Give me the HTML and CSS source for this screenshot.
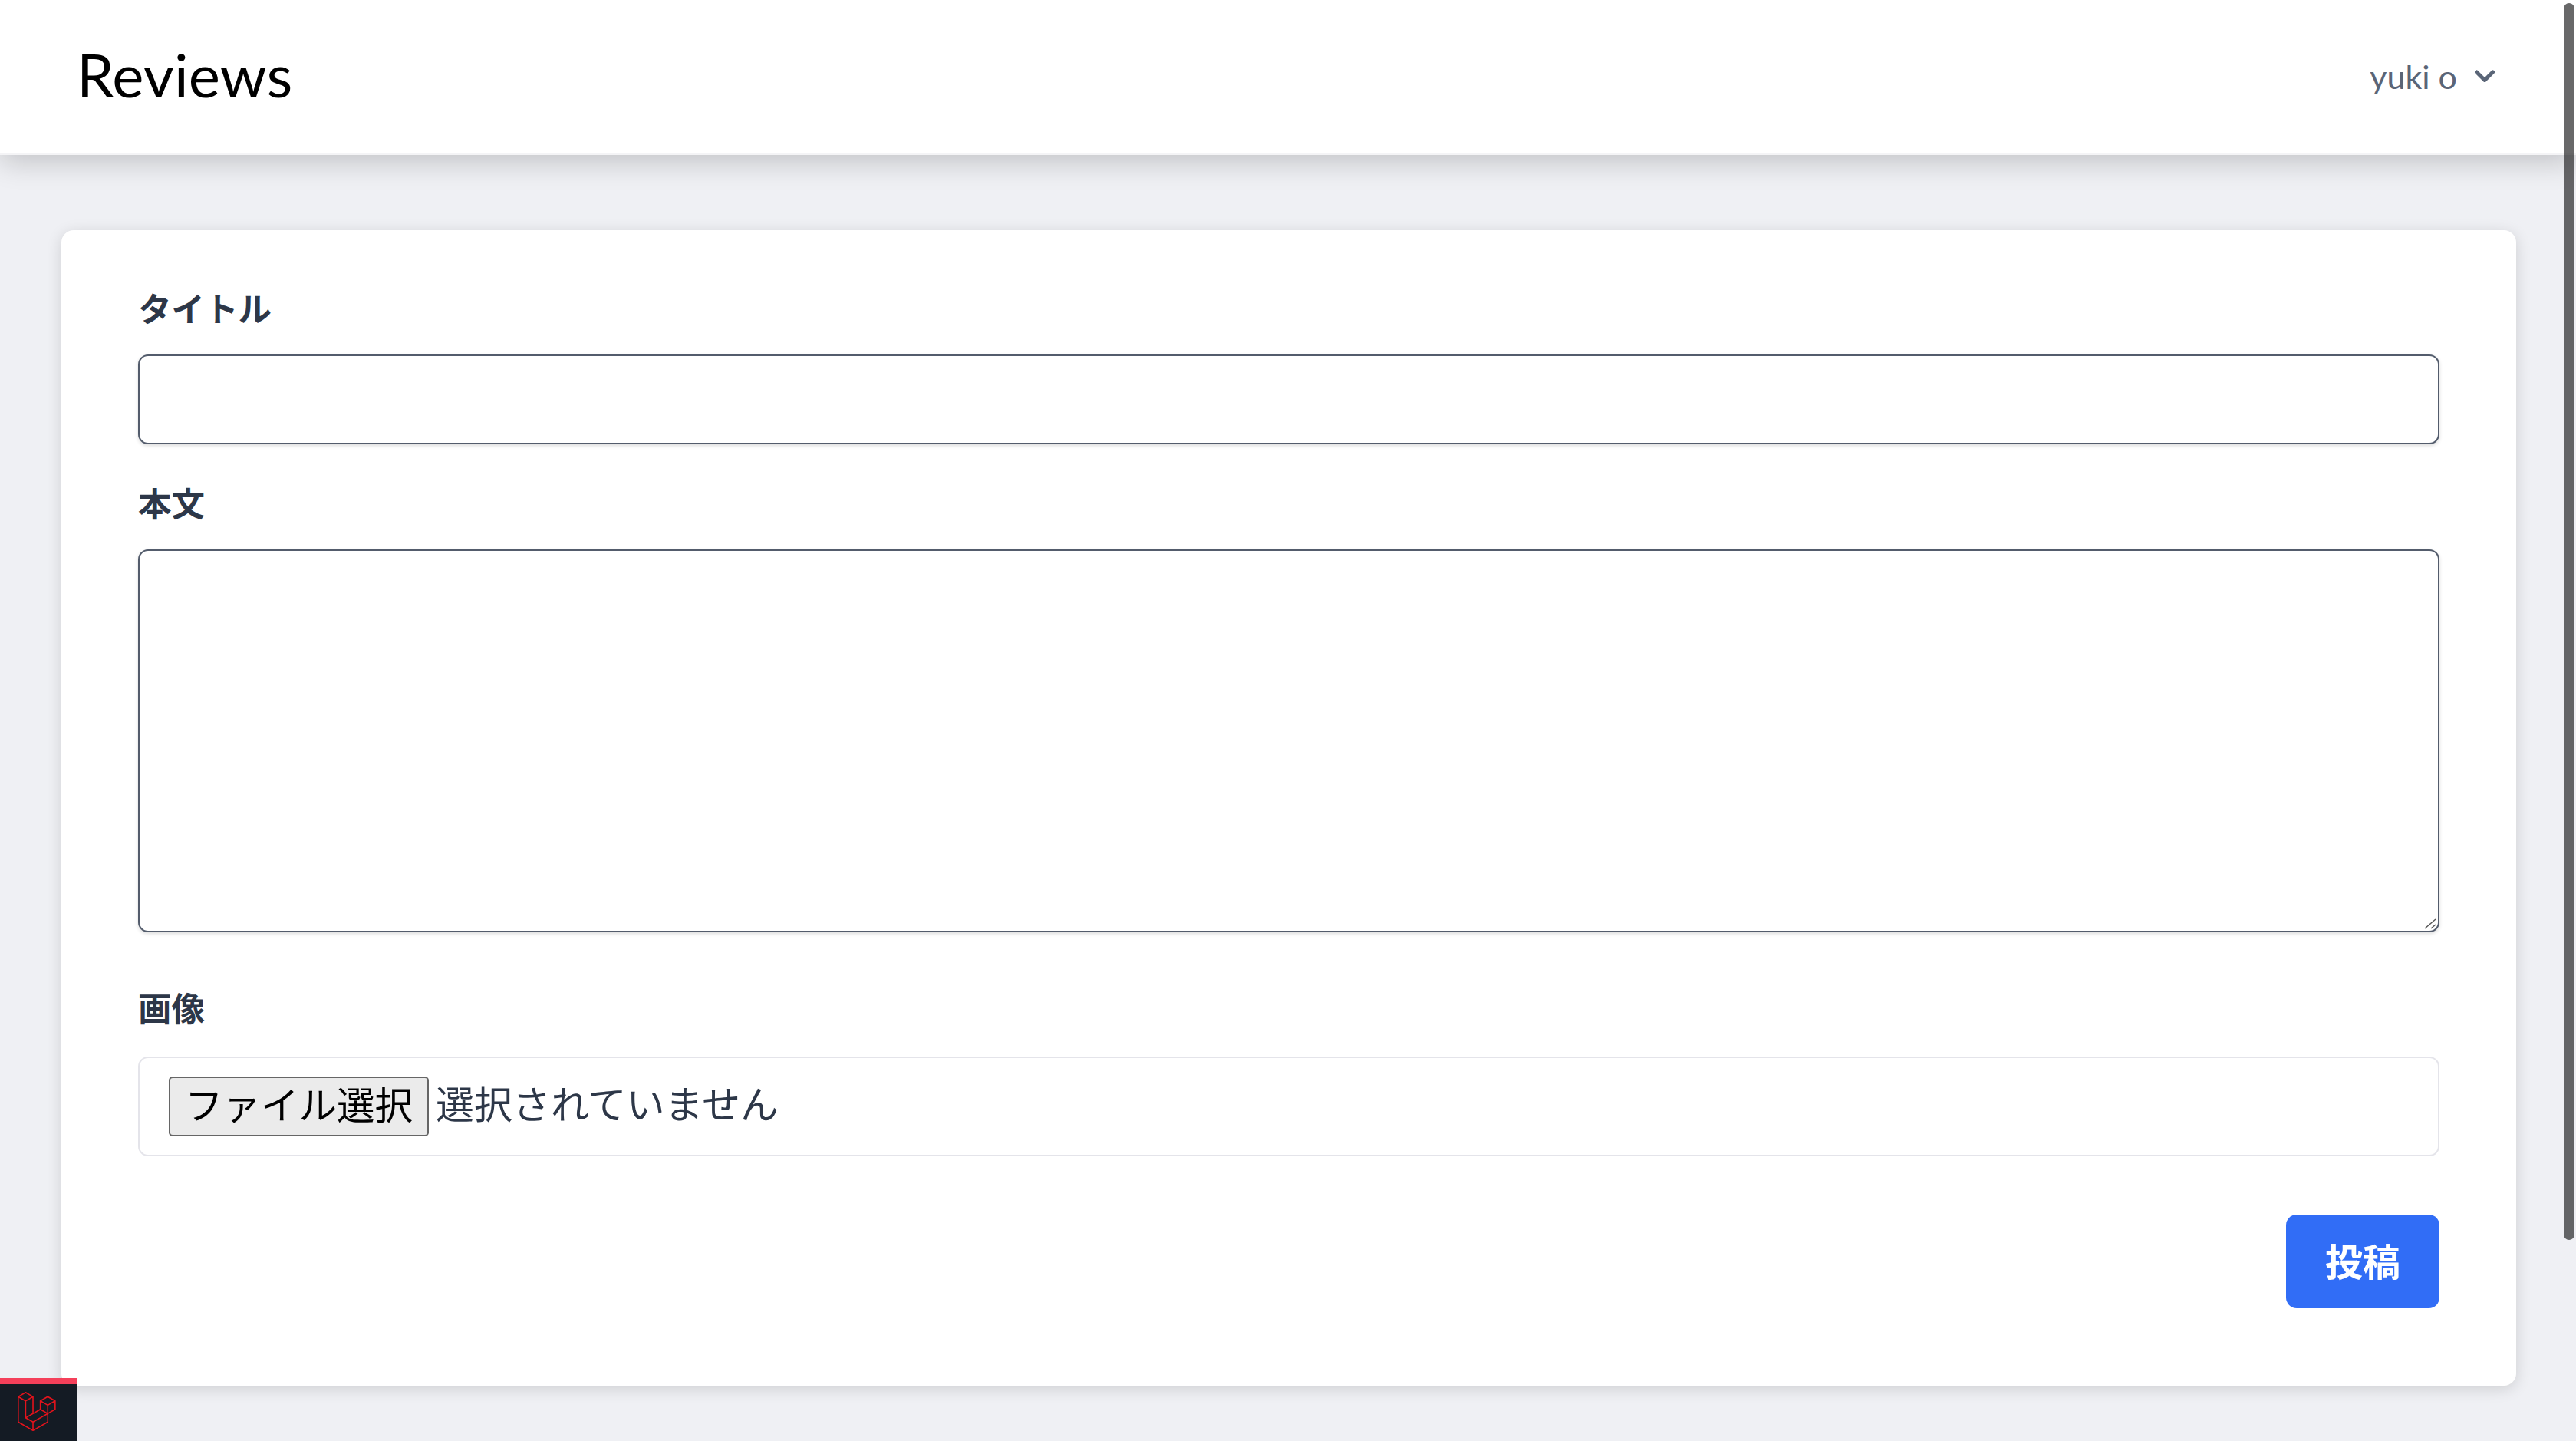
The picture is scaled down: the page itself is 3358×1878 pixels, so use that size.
FILE: index.html
```html
<!DOCTYPE html>
<html lang="ja">
<head>
<meta charset="utf-8">
<title>Reviews</title>
<link rel="stylesheet" href="styles.css">
</head>
<body>
<header class="topbar">
  <h1 class="brand">Reviews</h1>
  <div class="user">
    <span>yuki o</span>
    <svg class="chevron" viewBox="0 0 26 16" aria-hidden="true"><path d="M2.500 3 13 13.500 23.500 3" fill="none" stroke="currentColor" stroke-width="5" stroke-linecap="round" stroke-linejoin="round"/></svg>
  </div>
</header>
<main class="content">
  <form class="card">
    <label class="label label-first" for="title">タイトル</label>
    <input class="field field-title" id="title" type="text">
    <label class="label label-body" for="body">本文</label>
    <div class="textarea-wrap">
      <textarea class="field field-body" id="body"></textarea>
      <svg class="grip" viewBox="0 0 16 14" aria-hidden="true"><path d="M1 13 15 1M9 13l6-5" fill="none" stroke="#555" stroke-width="1.500"/></svg>
    </div>
    <label class="label label-image">画像</label>
    <div class="filebox">
      <button class="filebtn" type="button">ファイル選択</button>
      <span class="filename">選択されていません</span>
    </div>
    <div class="actions"><button class="submit" type="button">投稿</button></div>
  </form>
</main>
<div class="debugbar">
  <svg class="logo" viewBox="0 0 50 52" aria-hidden="true"><path fill="currentColor" d="M49.626 11.564a.809.809 0 0 1 .028.209v10.972a.8.8 0 0 1-.402.694l-9.209 5.302V39.25c0 .286-.152.55-.4.694L20.42 51.01c-.044.025-.092.041-.14.058-.018.006-.035.017-.054.022a.805.805 0 0 1-.41 0c-.022-.006-.042-.018-.063-.026-.044-.016-.09-.03-.132-.054L.402 39.944A.801.801 0 0 1 0 39.25V6.334c0-.072.01-.142.028-.21.006-.023.02-.044.028-.067.015-.042.029-.085.051-.124.015-.026.037-.047.055-.071.023-.032.044-.065.071-.093.023-.023.053-.04.079-.06.029-.024.055-.05.088-.069h.001l9.61-5.533a.802.802 0 0 1 .8 0l9.61 5.533h.002c.032.02.059.045.088.068.026.02.055.038.078.06.028.029.048.062.072.094.017.024.04.045.054.071.023.04.036.082.052.124.008.023.022.044.028.068a.809.809 0 0 1 .028.209v20.559l8.008-4.611v-10.51c0-.07.01-.141.028-.208.007-.024.02-.045.028-.068.016-.042.03-.085.052-.124.015-.026.037-.047.054-.071.024-.032.044-.065.072-.093.023-.023.052-.04.078-.06.03-.024.056-.05.088-.069h.001l9.611-5.533a.801.801 0 0 1 .8 0l9.61 5.533c.034.02.06.045.09.068.025.02.054.038.077.06.028.029.048.062.072.094.018.024.04.045.054.071.023.039.036.082.052.124.009.023.022.044.028.068zm-1.574 10.718v-9.124l-3.363 1.936-4.646 2.675v9.124l8.01-4.611zm-9.61 16.505v-9.13l-4.57 2.61-13.05 7.448v9.216l17.62-10.144zM1.602 7.719v31.068L19.22 48.93v-9.214l-9.204-5.209-.003-.002-.004-.002c-.031-.018-.057-.044-.086-.066-.025-.02-.054-.036-.076-.058l-.002-.003c-.026-.025-.044-.056-.066-.084-.02-.027-.044-.05-.06-.078l-.001-.003c-.018-.03-.029-.066-.042-.1-.013-.03-.03-.058-.038-.09v-.001c-.01-.038-.012-.078-.016-.117-.004-.03-.012-.06-.012-.09v-.002-21.481L4.965 9.654 1.602 7.72zm8.81-5.994L2.405 6.334l8.005 4.609 8.006-4.61-8.006-4.608zm4.164 28.764l4.645-2.674V7.719l-3.363 1.936-4.646 2.675v20.096l3.364-1.937zM39.243 7.164l-8.006 4.609 8.006 4.609 8.005-4.61-8.005-4.608zm-.801 10.605l-4.646-2.675-3.363-1.936v9.124l4.645 2.674 3.364 1.937v-9.124zM20.02 38.33l11.743-6.704 5.87-3.35-8-4.606-9.211 5.303-8.395 4.833 7.993 4.524z"/></svg>
</div>
<div class="scrollthumb"></div>
</body>
</html>
```

FILE: styles.css
```css
* { box-sizing: border-box; }
html, body { height: 100%; }
body {
  margin: 0;
  height: 1878px;
  overflow: hidden;
  position: relative;
  background: #eff0f4;
  font-family: Lato, "Noto Sans CJK JP", sans-serif;
  color: #2d3748;
}
.topbar {
  position: relative;
  height: 202px;
  padding: 0 106px 0 100px;
  display: flex;
  align-items: center;
  justify-content: space-between;
  background: #fff;
  border-bottom: 2px solid #f4f4f6;
  box-shadow: 0 8px 36px rgba(0, 0, 0, .2);
}
.brand {
  margin: 0;
  padding-bottom: 6px;
  font-size: 78px;
  line-height: 100px;
  font-weight: 400;
  color: #000;
}
.user {
  display: flex;
  align-items: center;
  gap: 23px;
  padding-bottom: 2px;
  font-size: 43px;
  color: #5a6577;
}
.chevron { width: 26px; height: 16px; }
.content { padding: 98px 78px 0 80px; }
.card {
  height: 1506px;
  padding: 80px 100px 0;
  background: #fff;
  border-radius: 16px;
  box-shadow: 0 4px 20px rgba(0, 0, 0, .14);
  display: flex;
  flex-direction: column;
}
.label {
  display: block;
  height: 46px;
  font-size: 43.500px;
  line-height: 42px;
  font-weight: 700;
  font-family: "Noto Sans CJK JP", sans-serif;
  color: #2d3748;
}
.label-first { margin-bottom: 36px; }
.label-body { margin-top: 55px; margin-bottom: 36px; }
.label-image { margin-top: 77px; margin-bottom: 39px; }
.field {
  display: block;
  width: 100%;
  border: 2px solid #535c6c;
  border-radius: 13px;
  background: #fff;
  box-shadow: 0 2px 5px rgba(0, 0, 0, .14);
  outline: none;
  margin: 0;
}
.field-title { height: 117px; }
.textarea-wrap { position: relative; }
.field-body { height: 499px; resize: none; }
.grip { position: absolute; right: 4px; bottom: 4px; width: 16px; height: 14px; }
.filebox {
  height: 130px;
  padding: 24px 38px 0;
  border: 2px solid #e4e4ea;
  border-radius: 13px;
  display: flex;
  align-items: flex-start;
  gap: 9px;
  font-family: "Noto Sans CJK JP", sans-serif;
  font-size: 50px;
  font-weight: 400;
}
.filebtn {
  width: 339px;
  height: 78px;
  padding: 0 0 8px;
  background: #ebebeb;
  border: 2px solid #666;
  border-radius: 5px;
  font: 400 49.500px/60px "Noto Sans CJK JP", sans-serif;
  color: #000;
}
.filename { line-height: 66px; color: #2d3748; white-space: nowrap; }
.actions {
  margin-top: 76px;
  display: flex;
  justify-content: flex-end;
}
.submit {
  width: 200px;
  height: 122px;
  padding: 0 0 5px;
  border: 0;
  border-radius: 14px;
  background: #316df6;
  color: #fff;
  font: 700 49px/1 "Noto Sans CJK JP", sans-serif;
}
.debugbar {
  position: absolute;
  left: 0;
  bottom: 0;
  width: 100px;
  height: 82px;
  background: #141b24;
  border-top: 8px solid #f4405a;
  color: #e3131c;
}
.logo { position: absolute; left: 22px; top: 10px; width: 52px; height: 52px; }
.scrollthumb {
  position: absolute;
  top: 4px;
  right: 2px;
  width: 14px;
  height: 1612px;
  border-radius: 7px;
  background: rgba(40, 40, 42, .7);
}
```
